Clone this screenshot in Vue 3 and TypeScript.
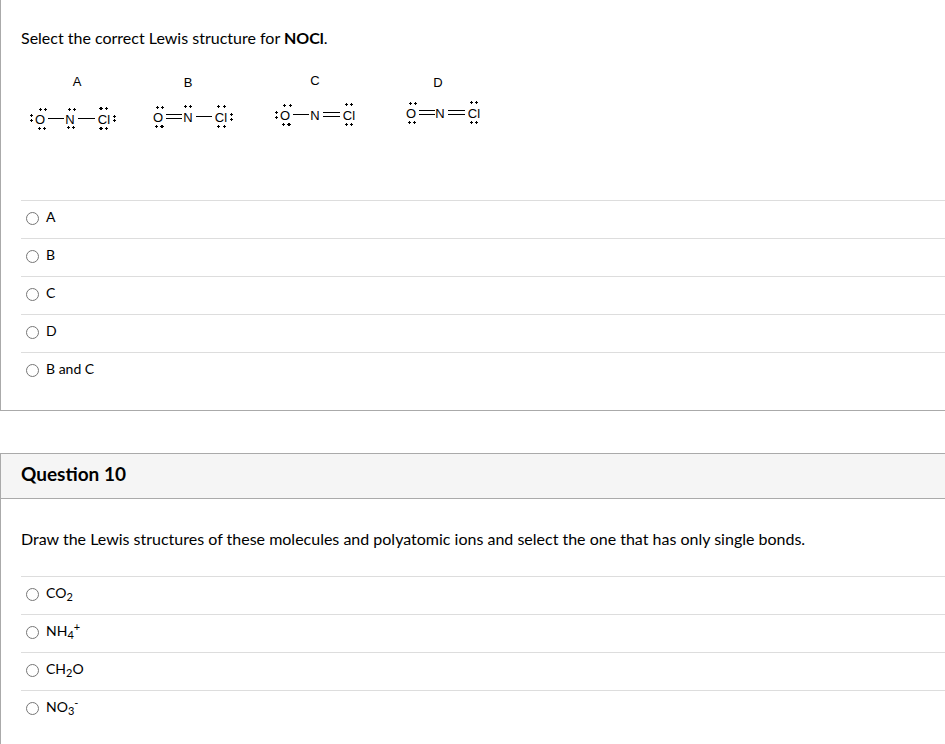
<script setup lang="ts">
import { ref } from 'vue'

type Point = [number, number]

interface Structure {
  name: string
  labelAt: Point
  atoms: { symbol: string; at: Point }[]
  bonds: { x: number; y: number; length: number }[]
  dots: Point[]
}

interface Choice {
  id: string
  base: string
  sub?: string
  sup?: string
  tail?: string
}

const structures: Structure[] = [
  {
    name: 'A',
    labelAt: [77, 86],
    atoms: [
      { symbol: 'O', at: [40, 124] },
      { symbol: 'N', at: [70, 124] },
      { symbol: 'Cl', at: [104, 124] },
    ],
    bonds: [
      { x: 48, y: 118, length: 16 },
      { x: 78, y: 118, length: 17 },
    ],
    dots: [
      [40, 109], [45, 109], [39, 128], [44, 128], [31, 115], [31, 120],
      [69, 109], [74, 109], [68, 127], [73, 127],
      [100, 108], [101, 108], [106, 108], [100, 128], [101, 128], [106, 128], [114, 116], [114, 120],
    ],
  },
  {
    name: 'B',
    labelAt: [188, 87],
    atoms: [
      { symbol: 'O', at: [158, 122] },
      { symbol: 'N', at: [188, 122] },
      { symbol: 'Cl', at: [221, 122] },
    ],
    bonds: [
      { x: 166, y: 114, length: 16 },
      { x: 166, y: 118, length: 16 },
      { x: 196, y: 116, length: 16 },
    ],
    dots: [
      [157, 107], [162, 107], [156, 126], [161, 126], [162, 126],
      [185, 106], [190, 106],
      [218, 106], [224, 106], [218, 126], [224, 126], [231, 114], [231, 119],
    ],
  },
  {
    name: 'C',
    labelAt: [315, 85],
    atoms: [
      { symbol: 'O', at: [285, 120] },
      { symbol: 'N', at: [315, 120] },
      { symbol: 'Cl', at: [349, 120] },
    ],
    bonds: [
      { x: 293, y: 114, length: 16 },
      { x: 323, y: 112, length: 17 },
      { x: 323, y: 116, length: 17 },
    ],
    dots: [
      [284, 105], [290, 105], [283, 124], [288, 124], [289, 124], [276, 112], [276, 117],
      [346, 104], [351, 104], [346, 124], [351, 124],
    ],
  },
  {
    name: 'D',
    labelAt: [438, 87],
    atoms: [
      { symbol: 'O', at: [411, 118] },
      { symbol: 'N', at: [440, 118] },
      { symbol: 'Cl', at: [474, 118] },
    ],
    bonds: [
      { x: 419, y: 110, length: 16 },
      { x: 419, y: 114, length: 16 },
      { x: 448, y: 110, length: 17 },
      { x: 448, y: 114, length: 17 },
    ],
    dots: [
      [410, 103], [415, 103], [409, 122], [414, 122],
      [471, 102], [476, 102], [471, 122], [476, 122],
    ],
  },
]

const structureChoices: Choice[] = [
  { id: 'a', base: 'A' },
  { id: 'b', base: 'B' },
  { id: 'c', base: 'C' },
  { id: 'd', base: 'D' },
  { id: 'bc', base: 'B and C' },
]

const moleculeChoices: Choice[] = [
  { id: 'co2', base: 'CO', sub: '2' },
  { id: 'nh4', base: 'NH', sub: '4', sup: '+' },
  { id: 'ch2o', base: 'CH', sub: '2', tail: 'O' },
  { id: 'no3', base: 'NO', sub: '3', sup: '-' },
]

const structureAnswer = ref<string>('')
const moleculeAnswer = ref<string>('')

// Each electron is a three-pixel plus, centred on its pixel.
const dotPath = (dots: Point[]): string =>
  dots.map(([x, y]) => `M${x} ${y - 1}h1v1h1v1h-1v1h-1v-1h-1v-1h1z`).join('')
</script>

<template>
  <main class="quiz">
    <section class="question">
      <div class="body first">
        <p id="prompt-9" class="prompt">Select the correct Lewis structure for <strong>NOCl</strong>.</p>
        <svg class="figure" viewBox="21 66 479 80" width="479" height="80">
          <g v-for="s in structures" :key="s.name">
            <text :x="s.labelAt[0]" :y="s.labelAt[1]">{{ s.name }}</text>
            <text v-for="(atom, i) in s.atoms" :key="i" :x="atom.at[0]" :y="atom.at[1]">{{ atom.symbol }}</text>
            <rect v-for="(b, i) in s.bonds" :key="i" :x="b.x" :y="b.y" :width="b.length" height="1" />
            <path :d="dotPath(s.dots)" />
          </g>
        </svg>
        <div class="choices" role="radiogroup" aria-labelledby="prompt-9">
          <div v-for="c in structureChoices" :key="c.id" class="choice">
            <input :id="'q9-' + c.id" v-model="structureAnswer" type="radio" name="q9" :value="c.id" />
            <label :for="'q9-' + c.id">{{ c.base }}</label>
          </div>
        </div>
      </div>
    </section>

    <section class="question">
      <header class="header">
        <h2>Question 10</h2>
      </header>
      <div class="body">
        <p id="prompt-10" class="prompt">
          Draw the Lewis structures of these molecules and polyatomic ions and select the one that has only single bonds.
        </p>
        <div class="choices" role="radiogroup" aria-labelledby="prompt-10">
          <div v-for="c in moleculeChoices" :key="c.id" class="choice">
            <input :id="'q10-' + c.id" v-model="moleculeAnswer" type="radio" name="q10" :value="c.id" />
            <label :for="'q10-' + c.id">{{ c.base }}<sub v-if="c.sub">{{ c.sub }}</sub><sup v-if="c.sup">{{ c.sup }}</sup>{{ c.tail }}</label>
          </div>
        </div>
      </div>
    </section>
  </main>
</template>

<style>
body {
  background: #fff;
  overflow-x: hidden;
}
</style>

<style scoped>
.quiz {
  display: flex;
  flex-direction: column;
  gap: 42px;
  color: #000;
  font-family: Lato, "Liberation Sans", sans-serif;
}

.question {
  border-left: 1px solid #aaa;
}

.question:first-child {
  border-bottom: 1px solid #aaa;
}

.header {
  padding: 8px 20px 12px;
  border-top: 1px solid #aaa;
  border-bottom: 1px solid #aaa;
  background: #f5f5f5;
}

.header h2 {
  margin: 0;
  font-size: 19px;
  font-weight: 700;
  line-height: 24px;
}

.body {
  padding: 28px 0 16px 20px;
}

.body.first {
  padding: 26px 0 20px 20px;
}

.prompt {
  margin: 0;
  font-size: 16px;
  line-height: 24px;
}

.figure {
  display: block;
  margin: 16px 0 54px;
}

.figure text {
  font-family: "Liberation Sans", sans-serif;
  font-size: 13px;
  text-anchor: middle;
}

.figure rect,
.figure path {
  fill: #000;
  shape-rendering: crispEdges;
}

.prompt + .choices {
  margin-top: 25px;
}

.choice {
  display: flex;
  align-items: flex-start;
  box-sizing: border-box;
  height: 38px;
  padding: 6px 5px;
  border-top: 1px solid #ddd;
}

.choice input {
  flex: none;
  width: 13px;
  height: 13px;
  margin: 5px 7px 0 0;
}

.choice label {
  font-size: 14px;
  line-height: 20px;
}

.choice sub,
.choice sup {
  position: relative;
  font-size: 11px;
  line-height: 0;
  vertical-align: baseline;
}

.choice sub {
  bottom: -3px;
}

.choice sup {
  top: -5px;
}
</style>
